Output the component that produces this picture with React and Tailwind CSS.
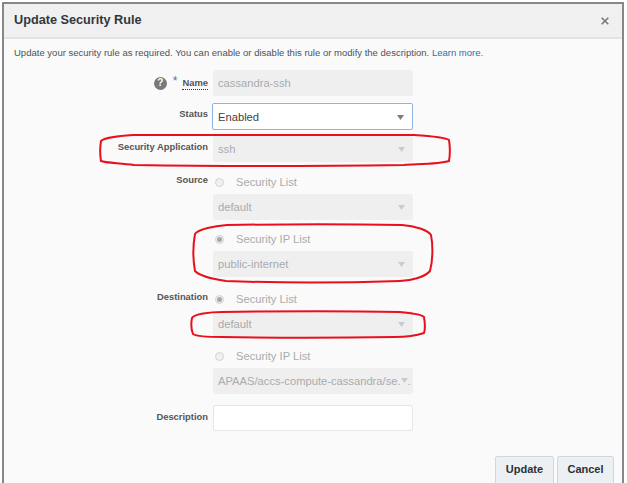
function Caret({ light }) {
  return (
    <svg width="7" height="5" viewBox="0 0 7 5" className="shrink-0">
      <path d="M0 0H7L3.5 5Z" fill={light ? "#c9cbce" : "#7b7d80"} />
    </svg>
  );
}

function Label({ children, className = "" }) {
  return (
    <div className={`w-[204px] shrink-0 text-right text-[9.4px] font-bold text-[#555] leading-[12px] ${className}`}>
      {children}
    </div>
  );
}

function DisabledSelect({ value, tail }) {
  return (
    <div className={`w-[200px] h-[26px] ml-[5px] rounded-[2px] bg-[#efeff0] flex items-center justify-between pl-[5px] text-[11.2px] text-[#a9abad] ${tail ? "pr-[5px]" : "pr-[8px]"}`}>
      <span className="whitespace-nowrap">{value}</span>
      <span className="flex items-center">
        <Caret light />
        {tail && <span>.</span>}
      </span>
    </div>
  );
}

function RadioRow({ label, checked, title, labelClass = "" }) {
  return (
    <div className="flex h-[24px] items-center pt-[1px]">
      <Label className={labelClass}>{title}</Label>
      <span className="ml-[7px] w-[9px] h-[9px] rounded-full border border-[#d2d2d2] bg-[#f0f0f0] flex items-center justify-center">
        {checked && <span className="w-[5px] h-[5px] rounded-full bg-[#a8a8a8]" />}
      </span>
      <span className="ml-[12px] text-[11.2px] text-[#a9abad]">{label}</span>
    </div>
  );
}

export default function App() {
  return (
    <div className="relative w-[627px] h-[483px] overflow-hidden bg-white pt-[2px] pl-[2px] font-['Liberation_Sans',Arial,sans-serif]">
      <div className="w-[622px] h-[481px] border-2 border-b-0 border-[#85878a] bg-[#fafafa] flex flex-col">
        <div className="h-[35px] shrink-0 bg-[#f0f0f0] border-b-2 border-[#dfe3e6] flex items-center justify-between pl-[10px] pr-[13px] pt-[1px]">
          <span className="text-[12.7px] font-bold text-[#33373b]">Update Security Rule</span>
          <svg width="8" height="8" viewBox="0 0 8 8">
            <path d="M0.7 0.7L7.3 7.3M7.3 0.7L0.7 7.3" stroke="#77797c" strokeWidth="1.6" />
          </svg>
        </div>

        <div className="pl-[10px] pt-[8px] h-[31px] shrink-0 text-[9.53px] text-[#4e5256] leading-[12px]">
          Update your security rule as required. You can enable or disable this rule or modify the description.{" "}
          <span className="text-[#2a6fad]">Learn more.</span>
        </div>

        <div className="flex items-center">
          <div className="w-[204px] shrink-0 flex items-center justify-end text-[9.4px] font-bold text-[#555] leading-[12px]">
            <span className="w-[13px] h-[13px] rounded-full bg-[#77797c] text-white text-[10px] font-bold flex items-center justify-center mr-[6px]">?</span>
            <span className="text-[#2a7bd0] text-[12px] font-normal mr-[5px] -mt-[4px]">*</span>
            <span className="border-b border-dotted border-[#333]">Name</span>
          </div>
          <div className="w-[200px] h-[26px] ml-[5px] rounded-[2px] bg-[#efeff0] flex items-center pl-[5px] text-[11.2px] text-[#a9abad]">
            cassandra-ssh
          </div>
        </div>

        <div className="flex mt-[7px]">
          <Label className="pt-[5px]">Status</Label>
          <div className="w-[201px] h-[27px] ml-[4px] rounded-[2px] border border-[#8db4e8] bg-white flex items-center justify-between pl-[5px] pr-[8px] pt-[1px] text-[11.2px] text-[#3f4346]">
            <span>Enabled</span>
            <Caret />
          </div>
        </div>

        <div className="flex mt-[6px]">
          <Label className="pt-[5px]">Security Application</Label>
          <DisabledSelect value="ssh" />
        </div>

        <div className="mt-[8px]">
          <RadioRow title="Source" label="Security List" labelClass="-mt-[5px]" />
        </div>
        <div className="flex">
          <div className="w-[204px] shrink-0" />
          <DisabledSelect value="default" />
        </div>

        <div className="mt-[7px]">
          <RadioRow label="Security IP List" checked />
        </div>
        <div className="flex">
          <div className="w-[204px] shrink-0" />
          <DisabledSelect value="public-internet" />
        </div>

        <div className="mt-[10px]">
          <RadioRow title="Destination" label="Security List" checked labelClass="-mt-[5px]" />
        </div>
        <div className="flex">
          <div className="w-[204px] shrink-0" />
          <DisabledSelect value="default" />
        </div>

        <div className="mt-[7px]">
          <RadioRow label="Security IP List" />
        </div>
        <div className="flex">
          <div className="w-[204px] shrink-0" />
          <DisabledSelect value={"APAAS/accs-compute-cassandra/se."} tail />
        </div>

        <div className="flex items-center mt-[11px]">
          <Label className="-mt-[2px]">Description</Label>
          <div className="w-[200px] h-[26px] ml-[5px] rounded-[2px] border border-[#e4e6e8] bg-white" />
        </div>

        <div className="flex justify-end gap-[3px] pr-[8px] mt-[25px]">
          <div className="w-[59px] h-[30px] rounded-t-[2px] border border-[#d3d7da] bg-[#ecf0f3] flex items-center justify-center pb-[4px] text-[11px] font-bold text-[#2b3135]">Update</div>
          <div className="w-[57px] h-[30px] rounded-t-[2px] border border-[#d3d7da] bg-[#ecf0f3] flex items-center justify-center pb-[4px] text-[11px] font-bold text-[#2b3135]">Cancel</div>
        </div>
      </div>

      <svg className="absolute inset-0 pointer-events-none" width="627" height="483" viewBox="0 0 627 483" fill="none" stroke="#e8101c" strokeWidth="2">
        <path d="M101 141C105 137 120 136 134 135C200 135 350 135 414 135C430 136 445 137 449 140C450 146 450 155 449 161C440 164 420 164 404 165C330 166 200 166 134 165C120 163 105 163 101 161C100 155 100 147 101 141Z" />
        <path d="M195 234C198 229 215 226 227 225C290 224 350 224 402 225C415 226 428 230 431 235C433 245 433 260 430 271C425 277 410 281 400 281C340 283 280 283 226 281C212 279 199 275 195 271C193 260 193 245 195 234Z" />
        <path d="M192 318C194 314 210 312 222 312C290 311 350 311 400 312C410 313 422 314 424 317C425 323 425 330 424 333C418 335 405 337 395 337C330 338 280 338 222 337C210 337 196 336 193 334C191 329 191 323 192 318Z" />
      </svg>
    </div>
  );
}
